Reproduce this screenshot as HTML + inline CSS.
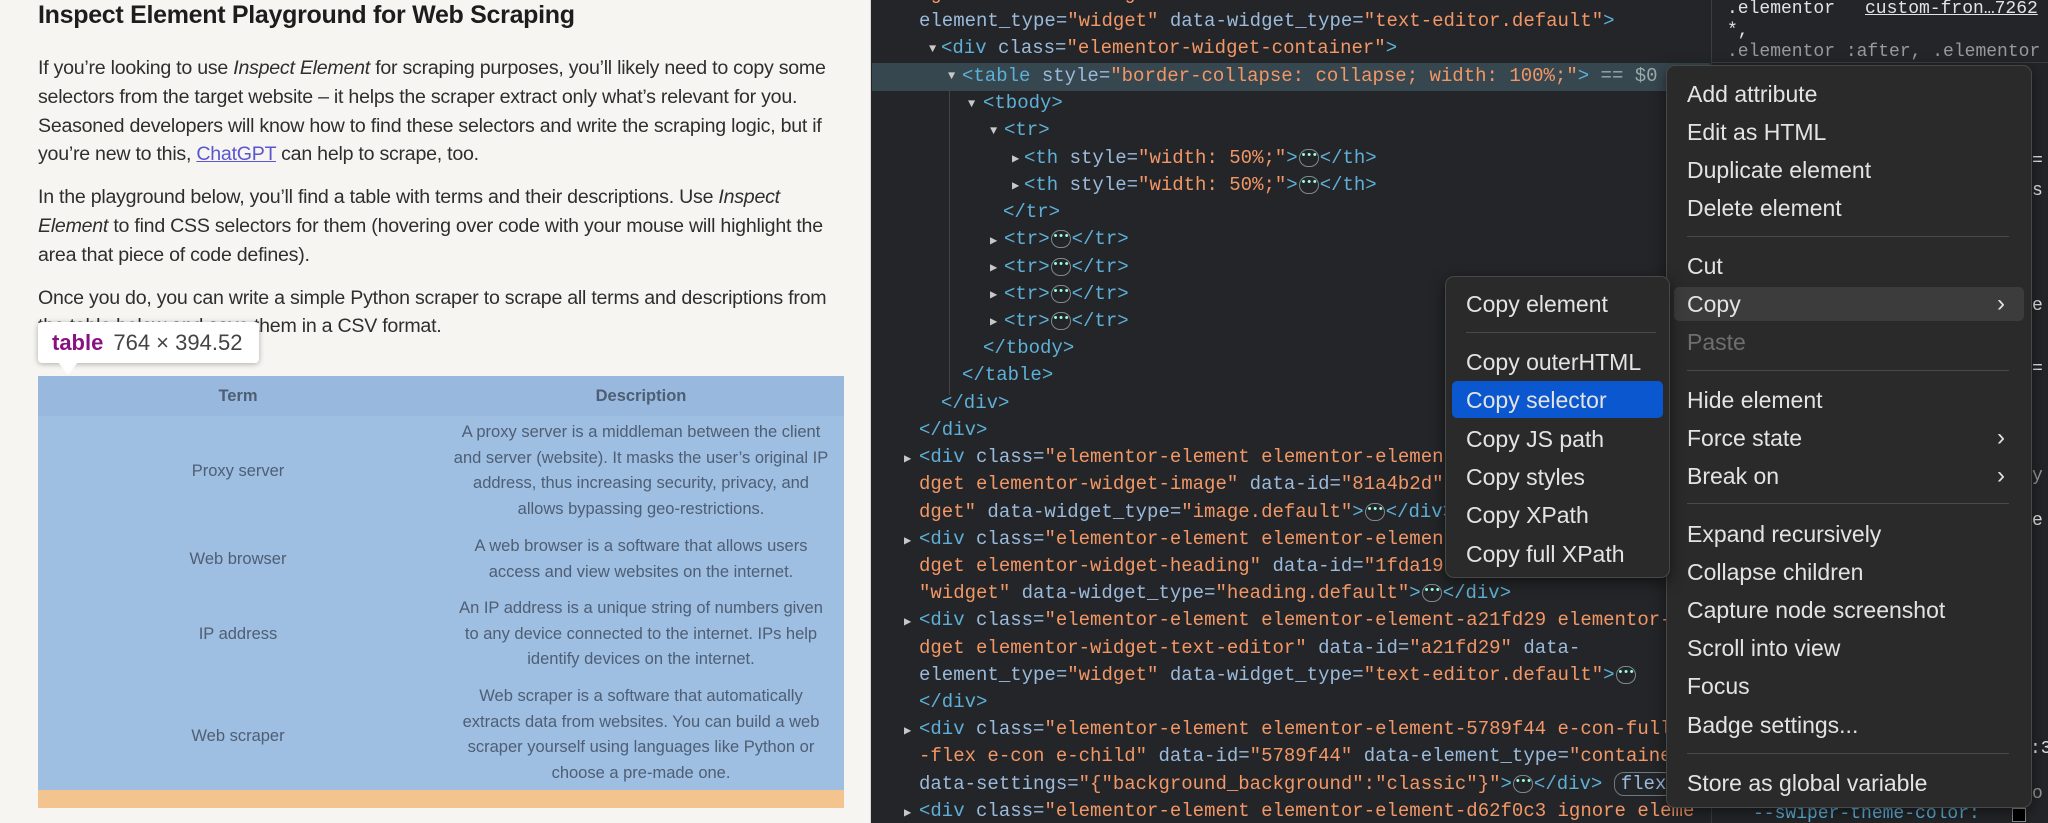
<!DOCTYPE html>
<html><head><meta charset="utf-8"><style>
*{margin:0;padding:0;box-sizing:border-box}
body{width:2048px;height:823px;overflow:hidden;position:relative;background:#242528;font-family:"Liberation Sans",sans-serif}
#left{position:absolute;left:0;top:0;width:871px;height:823px;background:#f6f5f1;border-right:1px solid #d8d8d8}
.h{position:absolute;left:38px;top:1px;font-size:25px;font-weight:bold;color:#1d1d1d;letter-spacing:-0.3px}
.p{position:absolute;left:38px;font-size:19.6px;color:#2e2e2e;white-space:nowrap;letter-spacing:-0.25px;line-height:20px}
.p a{color:#5a56d0;text-decoration:underline}
#tip{position:absolute;left:38px;top:322px;width:221px;height:41px;background:#fff;border-radius:4px;box-shadow:0 1px 6px rgba(0,0,0,.3);font-size:22px;line-height:41px;padding-left:14px;white-space:nowrap}
#tip b{color:#881280}
#tip span{color:#444;margin-left:10px}
#tipa{position:absolute;left:58px;top:362px;width:0;height:0;border-left:10px solid transparent;border-right:10px solid transparent;border-top:13px solid #fff}
#tbl{position:absolute;left:38px;top:376px;width:806px;height:414px;background:#9ebee2}
#tbl .hd{position:absolute;left:0;top:0;width:806px;height:40px;background:#98b8dd}
#orange{position:absolute;left:38px;top:790px;width:806px;height:18px;background:#f3c48e}
.c{position:absolute;text-align:center;color:#4e5e74;font-size:16.5px;line-height:25.7px;white-space:nowrap}
.t1{left:38px;width:400px}
.t2{left:438px;width:406px}
#el{position:absolute;left:872px;top:0;width:838px;height:823px;overflow:hidden;font-family:"Liberation Mono",monospace;font-size:19px;color:#9bbbdc}
.l{position:absolute;white-space:pre;height:27.2px;line-height:27.2px}
.tg{color:#5db0d7}.an{color:#9bbbdc}.av{color:#f29766}.pu{color:#5db0d7}
.tri{position:absolute;color:#c8c8c8;font-size:12px}
.dots{display:inline-block;width:20px;height:18px;border:1.5px solid #7d8a8f;border-radius:9px;vertical-align:middle;color:#9fd;font-size:11px;line-height:13px;text-align:center;letter-spacing:-1px;margin:0 1px}
#hl{position:absolute;left:872px;top:63px;width:838px;height:28px;background:#37474f}
#sty{position:absolute;left:1711px;top:0;width:337px;height:823px;border-left:1px solid #3c3c3c;font-family:"Liberation Mono",monospace;font-size:18px;color:#e3e3e3;overflow:hidden}
.s{position:absolute;white-space:pre;line-height:22px}
#menu{position:absolute;left:1666px;top:65px;width:366px;height:743px;background:#2a2a2b;border:1px solid #474747;border-radius:9px;box-shadow:0 4px 14px rgba(0,0,0,.5)}
.mi{position:absolute;left:20px;font-size:23px;color:#e3e3e3;white-space:nowrap;line-height:28px}
.sep{position:absolute;left:20px;width:322px;height:1px;background:#4a4a4a}
.chev{position:absolute;left:330px;color:#e3e3e3;font-size:24px;line-height:28px}
#sub{position:absolute;left:1445px;top:276px;width:225px;height:302px;background:#2a2a2b;border:1px solid #474747;border-radius:9px;box-shadow:0 4px 14px rgba(0,0,0,.5)}
</style></head><body>
<div id="left">
<div class="h">Inspect Element Playground for Web Scraping</div>
<div class="p" style="top:58px">If you’re looking to use <i>Inspect Element</i> for scraping purposes, you’ll likely need to copy some</div>
<div class="p" style="top:87px">selectors from the target website – it helps the scraper extract only what’s relevant for you.</div>
<div class="p" style="top:116px">Seasoned developers will know how to find these selectors and write the scraping logic, but if</div>
<div class="p" style="top:144px">you’re new to this, <a>ChatGPT</a> can help to scrape, too.</div>
<div class="p" style="top:187px">In the playground below, you’ll find a table with terms and their descriptions. Use <i>Inspect</i></div>
<div class="p" style="top:216px"><i>Element</i> to find CSS selectors for them (hovering over code with your mouse will highlight the</div>
<div class="p" style="top:245px">area that piece of code defines).</div>
<div class="p" style="top:288px">Once you do, you can write a simple Python scraper to scrape all terms and descriptions from</div>
<div class="p" style="top:316px">the table below and save them in a CSV format.</div>
</div>
<div id="tbl"><div class="hd"></div></div>
<div id="orange"></div>
<div class="c t1" style="top:384px;font-weight:bold">Term</div>
<div class="c t2" style="top:384px;font-weight:bold">Description</div>
<div class="c t1" style="top:459px">Proxy server</div>
<div class="c t2" style="top:420px">A proxy server is a middleman between the client<br>and server (website). It masks the user’s original IP<br>address, thus increasing security, privacy, and<br>allows bypassing geo-restrictions.</div>
<div class="c t1" style="top:547px">Web browser</div>
<div class="c t2" style="top:534px">A web browser is a software that allows users<br>access and view websites on the internet.</div>
<div class="c t1" style="top:622px">IP address</div>
<div class="c t2" style="top:596px">An IP address is a unique string of numbers given<br>to any device connected to the internet. IPs help<br>identify devices on the internet.</div>
<div class="c t1" style="top:724px">Web scraper</div>
<div class="c t2" style="top:684px">Web scraper is a software that automatically<br>extracts data from websites. You can build a web<br>scraper yourself using languages like Python or<br>choose a pre-made one.</div>
<div id="tip"><b>table</b><span>764 × 394.52</span></div>
<div id="tipa"></div>

<div id="hl"></div>
<div id="el">
<div style="position:absolute;left:77px;top:90px;width:1px;height:305px;background:#444"></div>
<div class="l" style="left:47px;top:-19px"><span class="av">dget elementor-widget-text-editor"</span> data-id=<span class="av">"a21fd29"</span> data-</div>
<div class="l" style="left:47px;top:8px">element_type=<span class="av">"widget"</span> data-widget_type=<span class="av">"text-editor.default"</span><span class="tg">&gt;</span></div>
<div class="tri" style="left:57px;top:42px">▼</div><div class="l" style="left:69px;top:35px"><span class="tg">&lt;div</span> class=<span class="av">"elementor-widget-container"</span><span class="tg">&gt;</span></div>
<div class="tri" style="left:76px;top:69px">▼</div><div class="l" style="left:90px;top:63px"><span class="tg">&lt;table</span> style=<span class="av">"border-collapse: collapse; width: 100%;"</span><span class="tg">&gt;</span> <span style="color:#9aa">== $0</span></div>
<div class="tri" style="left:96px;top:97px">▼</div><div class="l" style="left:111px;top:90px"><span class="tg">&lt;tbody&gt;</span></div>
<div class="tri" style="left:118px;top:124px">▼</div><div class="l" style="left:132px;top:117px"><span class="tg">&lt;tr&gt;</span></div>
<div class="tri" style="left:140px;top:151px">▶</div><div class="l" style="left:152px;top:145px"><span class="tg">&lt;th</span> style=<span class="av">"width: 50%;"</span><span class="tg">&gt;</span><span class="dots">•••</span><span class="tg">&lt;/th&gt;</span></div>
<div class="tri" style="left:140px;top:178px">▶</div><div class="l" style="left:152px;top:172px"><span class="tg">&lt;th</span> style=<span class="av">"width: 50%;"</span><span class="tg">&gt;</span><span class="dots">•••</span><span class="tg">&lt;/th&gt;</span></div>
<div class="l" style="left:131px;top:199px"><span class="tg">&lt;/tr&gt;</span></div>
<div class="tri" style="left:118px;top:233px">▶</div><div class="l" style="left:132px;top:226px"><span class="tg">&lt;tr&gt;</span><span class="dots">•••</span><span class="tg">&lt;/tr&gt;</span></div>
<div class="tri" style="left:118px;top:260px">▶</div><div class="l" style="left:132px;top:254px"><span class="tg">&lt;tr&gt;</span><span class="dots">•••</span><span class="tg">&lt;/tr&gt;</span></div>
<div class="tri" style="left:118px;top:287px">▶</div><div class="l" style="left:132px;top:281px"><span class="tg">&lt;tr&gt;</span><span class="dots">•••</span><span class="tg">&lt;/tr&gt;</span></div>
<div class="tri" style="left:118px;top:314px">▶</div><div class="l" style="left:132px;top:308px"><span class="tg">&lt;tr&gt;</span><span class="dots">•••</span><span class="tg">&lt;/tr&gt;</span></div>
<div class="l" style="left:111px;top:335px"><span class="tg">&lt;/tbody&gt;</span></div>
<div class="l" style="left:90px;top:362px"><span class="tg">&lt;/table&gt;</span></div>
<div class="l" style="left:69px;top:390px"><span class="tg">&lt;/div&gt;</span></div>
<div class="l" style="left:47px;top:417px"><span class="tg">&lt;/div&gt;</span></div>
<div class="tri" style="left:32px;top:451px">▶</div><div class="l" style="left:47px;top:444px"><span class="tg">&lt;div</span> class=<span class="av">"elementor-element elementor-element-81a4b2d elementor-wi</span></div>
<div class="l" style="left:47px;top:471px"><span class="av">dget elementor-widget-image"</span> data-id=<span class="av">"81a4b2d"</span> data-element_type=<span class="av">"wi</span></div>
<div class="l" style="left:47px;top:499px"><span class="av">dget"</span> data-widget_type=<span class="av">"image.default"</span><span class="tg">&gt;</span><span class="dots">•••</span><span class="tg">&lt;/div&gt;</span></div>
<div class="tri" style="left:32px;top:533px">▶</div><div class="l" style="left:47px;top:526px"><span class="tg">&lt;div</span> class=<span class="av">"elementor-element elementor-element-1fda19 elementor-wi</span></div>
<div class="l" style="left:47px;top:553px"><span class="av">dget elementor-widget-heading"</span> data-id=<span class="av">"1fda19"</span> data-element_type=</div>
<div class="l" style="left:47px;top:580px"><span class="av">"widget"</span> data-widget_type=<span class="av">"heading.default"</span><span class="tg">&gt;</span><span class="dots">•••</span><span class="tg">&lt;/div&gt;</span></div>
<div class="tri" style="left:32px;top:614px">▶</div><div class="l" style="left:47px;top:607px"><span class="tg">&lt;div</span> class=<span class="av">"elementor-element elementor-element-a21fd29 elementor-wi</span></div>
<div class="l" style="left:47px;top:635px"><span class="av">dget elementor-widget-text-editor"</span> data-id=<span class="av">"a21fd29"</span> data-</div>
<div class="l" style="left:47px;top:662px">element_type=<span class="av">"widget"</span> data-widget_type=<span class="av">"text-editor.default"</span><span class="tg">&gt;</span><span class="dots">•••</span></div>
<div class="l" style="left:47px;top:689px"><span class="tg">&lt;/div&gt;</span></div>
<div class="tri" style="left:32px;top:723px">▶</div><div class="l" style="left:47px;top:716px"><span class="tg">&lt;div</span> class=<span class="av">"elementor-element elementor-element-5789f44 e-con-full e</span></div>
<div class="l" style="left:47px;top:743px"><span class="av">-flex e-con e-child"</span> data-id=<span class="av">"5789f44"</span> data-element_type=<span class="av">"container"</span></div>
<div class="l" style="left:47px;top:771px">data-settings=<span class="av">"{"background_background":"classic"}"</span><span class="tg">&gt;</span><span class="dots">•••</span><span class="tg">&lt;/div&gt;</span> <span style="border:1.5px solid #6b7a7f;border-radius:10px;padding:0 6px;color:#9bbbdc">flex</span></div>
<div class="tri" style="left:32px;top:805px">▶</div><div class="l" style="left:47px;top:798px"><span class="tg">&lt;div</span> class=<span class="av">"elementor-element elementor-element-d62f0c3 ignore eleme</span></div>
</div>

<div id="sty">
<div class="s" style="left:15px;top:-2px">.elementor</div>
<div class="s" style="left:153px;top:-2px;text-decoration:underline">custom-fron…7262</div>
<div class="s" style="left:15px;top:20px">*,</div>
<div class="s" style="left:15px;top:41px;color:#999">.elementor :after, .elementor</div>
<div style="position:absolute;left:0;top:62px;width:337px;height:1px;background:#3c3c3c"></div>
<div class="s" style="left:320px;top:150px">=</div>
<div class="s" style="left:320px;top:180px">s</div>
<div class="s" style="left:320px;top:295px">e</div>
<div class="s" style="left:320px;top:358px">=</div>
<div class="s" style="left:320px;top:465px;color:#999">y</div>
<div class="s" style="left:320px;top:510px">e</div>
<div class="s" style="left:318px;top:738px">:3</div>
<div class="s" style="left:320px;top:783px;color:#999">o</div>
<div class="s" style="left:41px;top:803px;color:#5db0d7">--swiper-theme-color:</div>
<div style="position:absolute;left:300px;top:808px;width:14px;height:14px;background:#000;border:1px solid #888"></div>
</div>

<div id="menu">
<div class="mi" style="top:14px">Add attribute</div>
<div class="mi" style="top:52px">Edit as HTML</div>
<div class="mi" style="top:90px">Duplicate element</div>
<div class="mi" style="top:128px">Delete element</div>
<div class="sep" style="top:170px"></div>
<div class="mi" style="top:186px">Cut</div>
<div style="position:absolute;left:7px;top:221px;width:350px;height:34px;background:#3c3c3d;border-radius:5px"></div>
<div class="mi" style="top:224px">Copy</div><div class="chev" style="top:224px">›</div>
<div class="mi" style="top:262px;color:#6e6e6e">Paste</div>
<div class="sep" style="top:304px"></div>
<div class="mi" style="top:320px">Hide element</div>
<div class="mi" style="top:358px">Force state</div><div class="chev" style="top:358px">›</div>
<div class="mi" style="top:396px">Break on</div><div class="chev" style="top:396px">›</div>
<div class="sep" style="top:437px"></div>
<div class="mi" style="top:454px">Expand recursively</div>
<div class="mi" style="top:492px">Collapse children</div>
<div class="mi" style="top:530px">Capture node screenshot</div>
<div class="mi" style="top:568px">Scroll into view</div>
<div class="mi" style="top:606px">Focus</div>
<div class="mi" style="top:645px">Badge settings...</div>
<div class="sep" style="top:687px"></div>
<div class="mi" style="top:703px">Store as global variable</div>
</div>

<div id="sub">
<div class="mi" style="top:13px">Copy element</div>
<div class="sep" style="top:55px;width:190px"></div>
<div class="mi" style="top:71px">Copy outerHTML</div>
<div style="position:absolute;left:6px;top:104px;width:211px;height:37px;background:#0b57d0;border-radius:5px"></div>
<div class="mi" style="top:109px">Copy selector</div>
<div class="mi" style="top:148px">Copy JS path</div>
<div class="mi" style="top:186px">Copy styles</div>
<div class="mi" style="top:224px">Copy XPath</div>
<div class="mi" style="top:263px">Copy full XPath</div>
</div>
</body></html>
